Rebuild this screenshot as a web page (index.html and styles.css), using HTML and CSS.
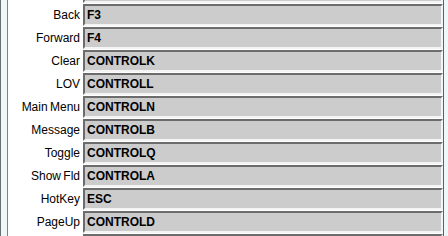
FILE: index.html
```html
<!DOCTYPE html>
<html>
<head>
<meta charset="utf-8">
<link rel="stylesheet" href="styles.css">
</head>
<body>
<div class="frame">
  <div class="panel">
    <div class="list">
      <div class="row"><span class="label"></span><span class="field"></span></div>
      <div class="row"><span class="label">Back</span><span class="field">F3</span></div>
      <div class="row"><span class="label">Forward</span><span class="field">F4</span></div>
      <div class="row"><span class="label">Clear</span><span class="field">CONTROLK</span></div>
      <div class="row"><span class="label">LOV</span><span class="field">CONTROLL</span></div>
      <div class="row"><span class="label">Main Menu</span><span class="field">CONTROLN</span></div>
      <div class="row"><span class="label">Message</span><span class="field">CONTROLB</span></div>
      <div class="row"><span class="label">Toggle</span><span class="field">CONTROLQ</span></div>
      <div class="row"><span class="label">Show Fld</span><span class="field">CONTROLA</span></div>
      <div class="row"><span class="label">HotKey</span><span class="field">ESC</span></div>
      <div class="row"><span class="label">PageUp</span><span class="field">CONTROLD</span></div>
      <div class="row"><span class="label"></span><span class="field"></span></div>
    </div>
  </div>
</div>
</body>
</html>
```
FILE: styles.css
```css
html, body {
  margin: 0;
  padding: 0;
  background: #eef8f8;
}
.frame {
  width: 448px;
  height: 236px;
  box-sizing: border-box;
  border-left: 1px solid #6a7070;
  padding-left: 6px;
  padding-right: 4px;
  overflow: hidden;
}
.panel {
  height: 236px;
  background: #ffffff;
  border-left: 1px solid #808080;
  border-right: 1px solid #606060;
  overflow: hidden;
  font-family: "Liberation Sans", Arial, sans-serif;
  font-size: 12px;
  color: #000;
}
.list {
  margin-top: -19px;
}
.row {
  display: grid;
  grid-template-columns: 72px 1fr;
  column-gap: 3px;
  height: 23px;
  align-items: start;
}
.label {
  text-align: right;
  line-height: 22px;
  height: 22px;
  white-space: nowrap;
  word-spacing: -1px;
  color: #000;
}
.field {
  height: 22px;
  box-sizing: border-box;
  background: #cccccc;
  border-top: 2px solid #6c6c6c;
  border-left: 2px solid #6c6c6c;
  border-bottom: 2px solid #f4f4f4;
  border-right: 2px solid #f4f4f4;
  padding-left: 2px;
  line-height: 18px;
  font-weight: bold;
  white-space: nowrap;
}
```
